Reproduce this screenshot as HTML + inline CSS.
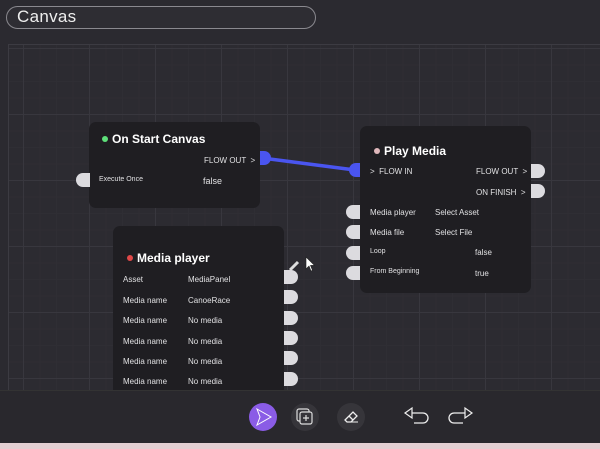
<!DOCTYPE html>
<html><head><style>
*{margin:0;padding:0;box-sizing:border-box}
body{width:600px;height:449px;background:#2b2a30;font-family:"Liberation Sans",sans-serif;position:relative;overflow:hidden;color:#e8e8ea}
.title{position:absolute;left:6px;top:6px;width:310px;height:23px;border:1.5px solid #8a898f;border-radius:12px;font-size:17px;padding-left:10px;line-height:20px;color:#eee;letter-spacing:.3px;background:#2e2d33}
.canvas{position:absolute;left:8px;top:44px;width:600px;height:346px;border:1.5px solid #3c3b42;border-right:none;border-bottom:none;
background-color:#2c2b31;
background-image:
linear-gradient(#38373e 1px,transparent 1px),
linear-gradient(90deg,#38373e 1px,transparent 1px),
linear-gradient(#2f2e34 1px,transparent 1px),
linear-gradient(90deg,#2f2e34 1px,transparent 1px);
background-size:66px 66px,66px 66px,16.5px 16.5px,16.5px 16.5px;
background-position:14px 3px,14px 3px,14px 3px,14px 3px}
.bar{position:absolute;left:0;top:390px;width:600px;height:53px;background:#29282d;border-top:1px solid #333}
.pink{position:absolute;left:0;top:443px;width:600px;height:6px;background:#e3cfd2}
.node{position:absolute;background:#1f1e22;border-radius:7px}
.node .h{position:absolute;font-weight:bold;font-size:12px;color:#fff}
.dot{display:inline-block;width:6px;height:6px;border-radius:50%;margin-right:4px;vertical-align:1px}
.t{position:absolute;font-size:8px;color:#e0e0e2;white-space:nowrap}
.port{position:absolute;width:14px;height:14px;background:#dcdbdf}
.pl{border-radius:7px 0 0 7px}
.pr{border-radius:0 7px 7px 0}
.btn{position:absolute;width:28px;height:28px;border-radius:50%;background:#36353a;top:403px}
</style></head><body>
<div class="title">Canvas</div>
<div class="canvas"></div>

<svg style="position:absolute;left:0;top:0" width="600" height="449">
<path d="M262 158 L355 170" stroke="#4a55f0" stroke-width="3.5" fill="none"/>
<path d="M260 151 h4 a6 6 0 0 1 0 14 h-4z" fill="#4a55f0"/>
<path d="M360 163 h-4 a6 6 0 0 0 0 14 h4z" fill="#4a55f0"/>
<path d="M290 270 L298 262" stroke="#ddd" stroke-width="3"/>
<path d="M306 257 v12 l3-3 l2 5 l1.5-.6 l-2-5 h4z" fill="#fff" stroke="#222" stroke-width=".6"/>
</svg>

<div class="node" style="left:89px;top:122px;width:171px;height:86px">
<div class="h" style="left:13px;top:10px"><span class="dot" style="background:#5ee07a"></span>On Start Canvas</div>
<div class="t" style="left:115px;top:34px">FLOW OUT &nbsp;&gt;</div>
<div class="t" style="left:10px;top:54px;font-size:7px">Execute Once</div>
<div class="t" style="left:114px;top:54px;font-size:9px">false</div>
</div>
<div class="port pl" style="left:76px;top:173px"></div>

<div class="node" style="left:360px;top:126px;width:171px;height:167px">
<div class="h" style="left:14px;top:18px"><span class="dot" style="background:#e0b8bc"></span>Play Media</div>
<div class="t" style="left:10px;top:41px">&gt; &nbsp;FLOW IN</div>
<div class="t" style="left:116px;top:41px">FLOW OUT &nbsp;&gt;</div>
<div class="t" style="left:116px;top:62px">ON FINISH &nbsp;&gt;</div>
<div class="t" style="left:10px;top:82px">Media player</div>
<div class="t" style="left:75px;top:82px">Select Asset</div>
<div class="t" style="left:10px;top:102px">Media file</div>
<div class="t" style="left:75px;top:102px">Select File</div>
<div class="t" style="left:10px;top:122px;font-size:7px">Loop</div>
<div class="t" style="left:115px;top:122px">false</div>
<div class="t" style="left:10px;top:142px;font-size:7px">From Beginning</div>
<div class="t" style="left:115px;top:143px">true</div>
</div>
<div class="port pr" style="left:531px;top:164px"></div>
<div class="port pr" style="left:531px;top:184px"></div>
<div class="port pl" style="left:346px;top:205px"></div>
<div class="port pl" style="left:346px;top:225px"></div>
<div class="port pl" style="left:346px;top:246px"></div>
<div class="port pl" style="left:346px;top:266px"></div>

<div class="node" style="left:113px;top:226px;width:171px;height:164px;border-radius:7px 7px 0 0">
<div class="h" style="left:14px;top:25px"><span class="dot" style="background:#e04848"></span>Media player</div>
<div class="t" style="left:10px;top:49px">Asset</div><div class="t" style="left:75px;top:49px">MediaPanel</div>
<div class="t" style="left:10px;top:70px">Media name</div><div class="t" style="left:75px;top:70px">CanoeRace</div>
<div class="t" style="left:10px;top:90px">Media name</div><div class="t" style="left:75px;top:90px">No media</div>
<div class="t" style="left:10px;top:111px">Media name</div><div class="t" style="left:75px;top:111px">No media</div>
<div class="t" style="left:10px;top:131px">Media name</div><div class="t" style="left:75px;top:131px">No media</div>
<div class="t" style="left:10px;top:151px">Media name</div><div class="t" style="left:75px;top:151px">No media</div>
</div>
<div class="port pr" style="left:284px;top:270px"></div>
<div class="port pr" style="left:284px;top:290px"></div>
<div class="port pr" style="left:284px;top:311px"></div>
<div class="port pr" style="left:284px;top:331px"></div>
<div class="port pr" style="left:284px;top:351px"></div>
<div class="port pr" style="left:284px;top:372px"></div>

<div class="bar"></div>
<div class="pink"></div>
<div class="btn" style="left:249px;background:#8a5ce6"></div>
<div class="btn" style="left:291px"></div>
<div class="btn" style="left:337px"></div>
<svg style="position:absolute;left:0;top:0" width="600" height="449">
<path d="M257 409 L271 417 L257 425 L260 417z" fill="none" stroke="#fff" stroke-width="1"/>
<rect x="297" y="409" width="12" height="12" rx="2" fill="none" stroke="#ddd" stroke-width="1.2"/>
<rect x="300" y="412" width="12" height="12" rx="2" fill="#36353a" stroke="#ddd" stroke-width="1.2"/>
<path d="M306 415 v6 M303 418 h6" stroke="#ddd" stroke-width="1.2"/>
<path d="M345 420 l8-8 l4 4 l-6 6 h-4z M349 416 l4 4" fill="none" stroke="#eee" stroke-width="1.3"/>
<path d="M350 422 h8" stroke="#eee" stroke-width="1"/>
<path d="M405 413 l7-5 v10z" fill="none" stroke="#eee" stroke-width="1.2"/>
<path d="M412 413 h11 a5 5 0 0 1 0 10 h-9" fill="none" stroke="#eee" stroke-width="1.3"/>
<path d="M472 413 l-7-5 v10z" fill="none" stroke="#eee" stroke-width="1.2"/>
<path d="M465 413 h-11 a5 5 0 0 0 0 10 h9" fill="none" stroke="#eee" stroke-width="1.3"/>
</svg>
</body></html>
